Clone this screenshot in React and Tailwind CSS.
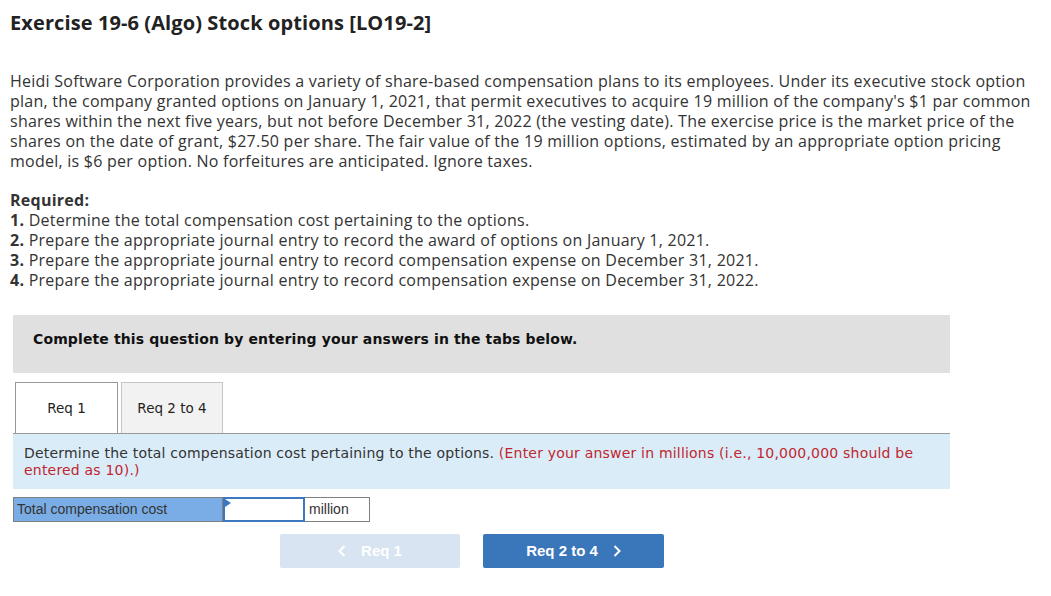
import React from 'react'

const body = { fontFamily: '"Open Sans", Lato, sans-serif' }
const verdana = { fontFamily: '"DejaVu Sans", Verdana, sans-serif' }
const arial = { fontFamily: '"Liberation Sans", Arial, sans-serif' }

const required = [
  'Determine the total compensation cost pertaining to the options.',
  'Prepare the appropriate journal entry to record the award of options on January 1, 2021.',
  'Prepare the appropriate journal entry to record compensation expense on December 31, 2021.',
  'Prepare the appropriate journal entry to record compensation expense on December 31, 2022.',
]

export default function App() {
  return (
    <div className="w-[1051px] min-h-[596px] bg-white px-[10px] pt-[9px] text-[#333]">
      {/* header */}
      <h1 style={body} className="text-[20px] leading-[28px] font-bold tracking-[0.1px] text-[#222]">
        Exercise 19-6 (Algo) Stock options [LO19-2]
      </h1>

      <p style={body} className="mt-[34px] text-[16px] leading-[20px] tracking-[0.25px]">
        Heidi Software Corporation provides a variety of share-based compensation plans to its employees. Under its executive stock option
        plan, the company granted options on January 1, 2021, that permit executives to acquire 19 million of the company's $1 par common
        shares within the next five years, but not before December 31, 2022 (the vesting date). The exercise price is the market price of the
        shares on the date of grant, $27.50 per share. The fair value of the 19 million options, estimated by an appropriate option pricing
        model, is $6 per option. No forfeitures are anticipated. Ignore taxes.
      </p>

      <div style={body} className="mt-[19px] text-[16px] leading-[20px] tracking-[0.25px]">
        <div className="font-bold">Required:</div>
        {required.map((item, i) => (
          <div key={i}>
            <span className="font-bold">{i + 1}.</span> {item}
          </div>
        ))}
      </div>

      {/* question box */}
      <div className="mt-[25px] ml-[3px] w-[937px]">
        <div className="h-[58px] bg-[#e0e0e0] pl-[20px] pt-[16px]">
          <div style={verdana} className="text-[14px] leading-[17px] font-bold tracking-[0.12px] text-[#111]">
            Complete this question by entering your answers in the tabs below.
          </div>
        </div>

        {/* tabs */}
        <div style={verdana} className="mt-[9px] flex gap-[3px] pl-[2px] text-[13.5px] text-[#222]">
          <div className="flex h-[51px] w-[103px] items-center justify-center border border-b-0 border-[#999] bg-white">
            Req 1
          </div>
          <div className="flex h-[51px] w-[102px] items-center justify-center border border-b-0 border-[#c6c6c6] bg-[#f2f2f2]">
            Req 2 to 4
          </div>
        </div>

        <div style={verdana} className="border-t border-[#999] bg-[#dbecf9] pl-[11px] pr-[20px] pt-[11px] pb-[10px] text-[14px] leading-[17px] tracking-[0.2px] text-[#333]">
          Determine the total compensation cost pertaining to the options.{' '}
          <span className="text-[#c0262d]">(Enter your answer in millions (i.e., 10,000,000 should be entered as 10).)</span>
        </div>

        {/* answer row */}
        <div style={arial} className="mt-[8px] flex h-[25px] text-[14px] text-[#333]">
          <div className="flex w-[210px] items-center border border-[#808080] bg-[#7aade5] pl-[3px]">
            Total compensation cost
          </div>
          <div className="relative w-[82px] border-2 border-[#3b78c0] bg-white">
            <span className="absolute left-0 top-0 h-0 w-0 border-y-[4px] border-l-[6px] border-y-transparent border-l-[#3b78c0]" />
          </div>
          <div className="flex w-[65px] items-center border border-l-0 border-[#808080] bg-white pl-[4px]">
            million
          </div>
        </div>

        {/* nav buttons */}
        <div style={arial} className="mt-[12px] flex gap-[23px] pl-[267px] text-[15px] font-bold text-white">
          <button className="flex h-[34px] w-[180px] items-center justify-center gap-[15px] rounded-[2px] bg-[#d8e4f1]">
            <svg width="8" height="12" viewBox="0 0 8 12" fill="none" stroke="white" strokeWidth="2">
              <polyline points="6.5,1 1.5,6 6.5,11" />
            </svg>
            <span>Req 1</span>
          </button>
          <button className="flex h-[34px] w-[181px] items-center justify-center gap-[15px] rounded-[2px] bg-[#3a76ba]">
            <span>Req 2 to 4</span>
            <svg width="8" height="12" viewBox="0 0 8 12" fill="none" stroke="white" strokeWidth="2">
              <polyline points="1.5,1 6.5,6 1.5,11" />
            </svg>
          </button>
        </div>
      </div>
    </div>
  )
}
